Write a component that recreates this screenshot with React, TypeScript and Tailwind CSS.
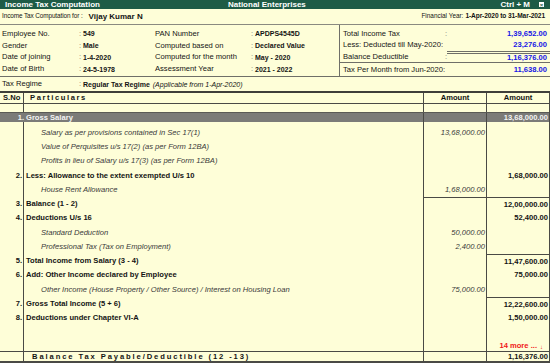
import React from "react";

type Row = {
  no?: string;
  label: string;
  sub?: boolean;
  a1?: string;
  a2?: string;
  line?: "both" | "right";
};

const rows: Row[] = [
  { label: "Salary as per provisions contained in Sec 17(1)", sub: true, a1: "13,68,000.00" },
  { label: "Value of Perquisites u/s 17(2) (as per Form 12BA)", sub: true },
  { label: "Profits in lieu of Salary u/s 17(3) (as per Form 12BA)", sub: true },
  { no: "2.", label: "Less: Allowance to the extent exempted U/s 10", a2: "1,68,000.00" },
  { label: "House Rent Allowance", sub: true, a1: "1,68,000.00" },
  { no: "3.", label: "Balance (1 - 2)", a2: "12,00,000.00", line: "both" },
  { no: "4.", label: "Deductions U/s 16", a2: "52,400.00" },
  { label: "Standard Deduction", sub: true, a1: "50,000.00" },
  { label: "Professional Tax (Tax on Employment)", sub: true, a1: "2,400.00" },
  { no: "5.", label: "Total Income from Salary (3 - 4)", a2: "11,47,600.00", line: "right" },
  { no: "6.", label: "Add: Other Income declared by Employee", a2: "75,000.00" },
  { label: "Other Income (House Property / Other Source) / Interest on Housing Loan", sub: true, a1: "75,000.00" },
  { no: "7.", label: "Gross Total Income (5 + 6)", a2: "12,22,600.00", line: "right" },
  { no: "8.", label: "Deductions under Chapter VI-A", a2: "1,50,000.00" },
];

const left = [
  ["Employee No.", "549", "PAN Number", "APDPS4545D"],
  ["Gender", "Male", "Computed based on", "Declared Value"],
  ["Date of joining", "1-4-2020", "Computed for the month", "May - 2020"],
  ["Date of Birth", "24-5-1978", "Assessment Year", "2021 - 2022"],
];

function Cells({ children, h, gray }: { children?: React.ReactNode; h: string; gray?: boolean }) {
  return (
    <div className={`flex ${h} ${gray ? "bg-[#7b7b78] text-[#f4f4f4]" : ""}`}>{children}</div>
  );
}

export default function App() {
  return (
    <div className="w-[550px] h-[363px] overflow-hidden bg-[#fefed8] text-[#141414] flex flex-col text-[7.6px] leading-none" style={{ fontFamily: '"Liberation Sans", Arial, sans-serif' }}>
      {/* title bar */}
      <div className="h-[9px] bg-[#1e5b46] text-white font-bold text-[8px] flex items-center relative px-[5px]">
        <span>Income Tax Computation</span>
        <span className="absolute left-[228px]">National Enterprises</span>
        <span className="ml-auto mr-[8px]">Ctrl + M</span>
        <span className="w-[7px] h-[7px] bg-white text-[#1e5b46] text-[6px] flex items-center justify-center border border-[#1e5b46]">×</span>
      </div>

      {/* computation for */}
      <div className="h-[16px] flex items-center px-[2px] border-b border-[#8a8a80]">
        <span className="text-[6.4px] tracking-[-0.1px]">Income Tax Computation for :</span>
        <span className="font-bold ml-[6px] text-[8px]">Vijay Kumar N</span>
        <span className="ml-auto text-[6.4px]">Financial Year:</span>
        <span className="ml-[2px] text-[6.6px] font-bold tracking-[-0.1px] mr-[3px]">1-Apr-2020 to 31-Mar-2021</span>
      </div>

      {/* employee block */}
      <div className="h-[52px] flex border-b border-[#6f6f68]">
        <div className="w-[340px] border-r border-[#6f6f68] pt-[2.5px] flex flex-col">
          {left.map((r) => (
            <div key={r[0]} className="h-[11.9px] flex items-center">
              <span className="w-[79px] pl-[2px]">{r[0]}</span>
              <span className="w-[4px] text-[#777]">:</span>
              <span className="w-[72px] font-bold text-[7px]">{r[1]}</span>
              <span className="w-[96px]">{r[2]}</span>
              <span className="w-[4px] text-[#777]">:</span>
              <span className="font-bold text-[7px]">{r[3]}</span>
            </div>
          ))}
        </div>
        <div className="flex-1 flex flex-col pt-[2.5px]">
          <div className="h-[11.9px] flex items-center pl-[3px] pr-[3px]">
            <span className="flex-1">Total Income Tax</span>
            <span className="text-[#777]">:</span>
            <span className="w-[100px] text-right font-bold text-[#1717e6]">1,39,652.00</span>
          </div>
          <div className="h-[11.9px] flex items-center pl-[3px] pr-[3px]">
            <span className="flex-1">Less: Deducted till May-2020:</span>
            <span className="w-[100px] text-right font-bold text-[#1717e6]">23,276.00</span>
          </div>
          <div className="h-[11.9px] flex items-center pl-[3px] border-b border-[#6f6f68]">
            <span className="flex-1">Balance Deductible</span>
            <span className="text-[#777]">:</span>
            <span className="w-[103px] h-full flex items-center justify-end pr-[3px] border-t-[3px] border-double border-[#6f6f68] font-bold text-[#1717e6]">1,16,376.00</span>
          </div>
          <div className="h-[13px] flex items-center pl-[3px] pr-[3px]">
            <span className="flex-1">Tax Per Month from Jun-2020:</span>
            <span className="w-[100px] text-right font-bold text-[#1717e6]">11,638.00</span>
          </div>
        </div>
      </div>

      {/* tax regime */}
      <div className="h-[16px] flex items-center border-b-2 border-[#3f3f3a]">
        <span className="w-[79px] pl-[2px]">Tax Regime</span>
        <span className="w-[4px] text-[#777]">:</span>
        <span className="font-bold text-[7px]">Regular Tax Regime</span>
        <span className="italic ml-[3px] text-[7px]">(Applicable from 1-Apr-2020)</span>
      </div>

      {/* table */}
      <div className="flex-1 flex flex-col border-r border-[#4a4a45]">
        <Cells h="h-[11px] font-bold border-b border-[#4a4a45]">
          <div className="w-[24px] border-r border-[#4a4a45] pl-[3px] flex items-center">S.No</div>
          <div className="w-[400px] border-r border-[#4a4a45] pl-[6px] flex items-center tracking-[1.6px]">Particulars</div>
          <div className="w-[63px] border-r border-[#4a4a45] flex items-center justify-center">Amount</div>
          <div className="flex-1 flex items-center justify-center">Amount</div>
        </Cells>
        <Cells h="h-[8px]">
          <div className="w-[24px] border-r border-[#4a4a45]" />
          <div className="w-[400px] border-r border-[#4a4a45]" />
          <div className="w-[63px] border-r border-[#4a4a45]" />
        </Cells>
        <Cells h="h-[10px] font-bold border-t border-[#5a5a55]" gray>
          <div className="w-[24px] flex items-center justify-end">1.</div>
          <div className="w-[400px] border-r border-[#4a4a45] pl-[2px] flex items-center">Gross Salary</div>
          <div className="w-[63px] border-r border-[#4a4a45]" />
          <div className="flex-1 flex items-center justify-end pr-[1px]">13,68,000.00</div>
        </Cells>
        <Cells h="h-[3.5px]">
          <div className="w-[24px] border-r border-[#4a4a45]" />
          <div className="w-[400px] border-r border-[#4a4a45]" />
          <div className="w-[63px] border-r border-[#4a4a45]" />
        </Cells>
        {rows.map((r, i) => (
          <Cells key={i} h="h-[14.28px]">
            <div className="w-[24px] border-r border-[#4a4a45] font-bold flex items-center justify-end pr-[1px]">{r.no}</div>
            <div className={`w-[400px] border-r border-[#4a4a45] flex items-center whitespace-nowrap ${r.sub ? "italic text-[#3a3a3a] pl-[17px]" : "font-bold pl-[2px]"}`}>
              {r.label}
            </div>
            <div className={`w-[63px] border-r border-[#4a4a45] italic text-[#3a3a3a] flex items-center justify-end pr-[1px] ${r.line === "both" ? "border-t" : ""}`}>
              {r.a1}
            </div>
            <div className={`flex-1 font-bold flex items-center justify-end pr-[1px] border-[#4a4a45] ${r.line ? "border-t" : ""}`}>
              {r.a2}
            </div>
          </Cells>
        ))}
        <Cells h="flex-1">
          <div className="w-[24px] border-r border-[#4a4a45]" />
          <div className="w-[400px] border-r border-[#4a4a45]" />
          <div className="w-[63px] border-r border-[#4a4a45]" />
          <div className="flex-1 flex items-end justify-end pb-[1px] pr-[6px] font-bold text-[#f01818]">
            14 more ... <span className="ml-[3px] text-[6px]">↓</span>
          </div>
        </Cells>
        <Cells h="h-[12px] font-bold border-t border-[#4a4a45] border-b-2">
          <div className="w-[24px] border-r border-[#4a4a45]" />
          <div className="w-[400px] border-r border-[#4a4a45] pl-[8px] flex items-center tracking-[1.9px]">Balance Tax Payable/Deductible (12 -13)</div>
          <div className="w-[63px] border-r border-[#4a4a45]" />
          <div className="flex-1 flex items-center justify-end pr-[1px]">1,16,376.00</div>
        </Cells>
      </div>
    </div>
  );
}
